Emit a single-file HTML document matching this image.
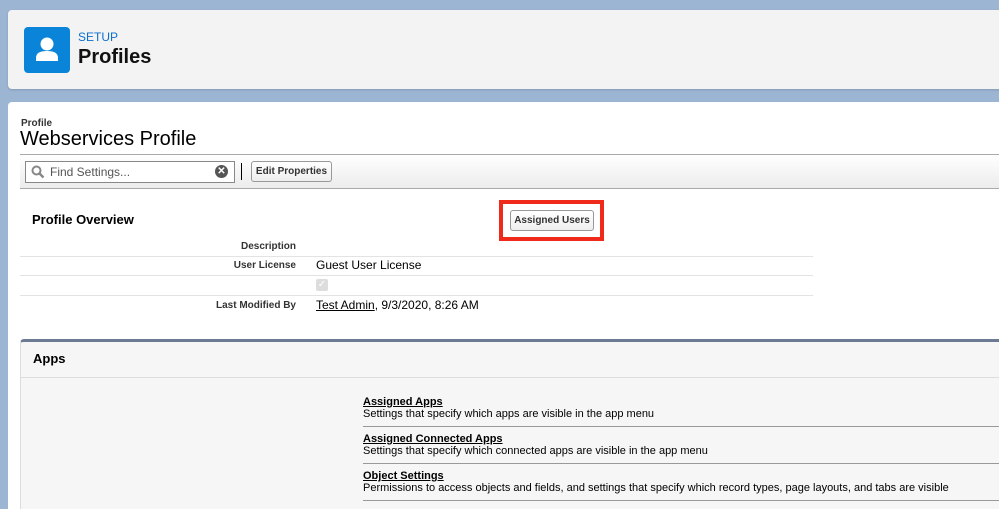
<!DOCTYPE html>
<html><head><style>
*{margin:0;padding:0;box-sizing:border-box}
html,body{width:999px;height:509px;overflow:hidden}
body{background:#9cb5d2;font-family:"Liberation Sans",Arial,sans-serif;position:relative;color:#000}
.a{position:absolute}
</style></head><body>
<div class="a" style="left:8px;top:10px;width:1000px;height:79px;background:#f3f3f3;border-radius:4px;box-shadow:0 1px 2px rgba(0,0,0,.15)"></div>
<div class="a" style="left:24px;top:27px;width:46px;height:46px;background:#0a84d8;border-radius:4px">
<svg width="46" height="46" viewBox="0 0 46 46"><circle cx="23" cy="17" r="6.5" fill="#fff"/><path d="M12 31c0-5 4-7 11-7s11 2 11 7v3H12z" fill="#fff"/></svg></div>
<div class="a" style="left:78px;top:30px;font-size:12px;color:#0a6fcf">SETUP</div>
<div class="a" style="left:78px;top:46px;font-size:20px;font-weight:bold;color:#111">Profiles</div>

<div class="a" style="left:8px;top:102px;width:1000px;height:420px;background:#fff;border-radius:4px"></div>
<div class="a" style="left:21px;top:118px;font-size:10px;font-weight:bold;color:#333">Profile</div>
<div class="a" style="left:20px;top:128px;font-size:20px;color:#000">Webservices Profile</div>
<div class="a" style="left:20px;top:154px;width:979px;height:35px;border-top:1px solid #aaa;border-bottom:1px solid #aaa;background:linear-gradient(#fff,#ececec)"></div>
<div class="a" style="left:25px;top:161px;width:210px;height:22px;border:1px solid #888;background:#fff"></div>
<svg class="a" style="left:31px;top:165px" width="14" height="14" viewBox="0 0 14 14"><circle cx="5.5" cy="5.5" r="4" fill="none" stroke="#888" stroke-width="2"/><path d="M8.5 8.5l4 4" stroke="#888" stroke-width="2.5"/></svg>
<div class="a" style="left:50px;top:165px;font-size:12px;color:#555">Find Settings...</div>
<div class="a" style="left:215px;top:165px;width:13px;height:13px;border-radius:50%;background:#555;color:#fff;font-size:10px;line-height:13px;text-align:center;font-weight:bold">✕</div>
<div class="a" style="left:241px;top:163px;width:1px;height:17px;background:#000"></div>
<div class="a" style="left:251px;top:161px;width:81px;height:21px;border:1px solid #999;border-radius:3px;background:linear-gradient(#fff,#eee);font-size:10px;font-weight:bold;color:#333;line-height:20px;text-align:center">Edit Properties</div>

<div class="a" style="left:32px;top:212px;font-size:13px;font-weight:bold">Profile Overview</div>
<div class="a" style="left:499px;top:200px;width:105px;height:41px;border:4px solid #f02a1a"></div>
<div class="a" style="left:510px;top:210px;width:84px;height:21px;border:1px solid #999;border-radius:3px;background:linear-gradient(#fff,#eee);font-size:10px;font-weight:bold;color:#333;line-height:20px;text-align:center">Assigned Users</div>

<div class="a" style="left:100px;top:241px;width:196px;text-align:right;font-size:10px;font-weight:bold;color:#333">Description</div>
<div class="a" style="left:20px;top:256px;width:793px;height:1px;background:#e3e3e3"></div>
<div class="a" style="left:100px;top:260px;width:196px;text-align:right;font-size:10px;font-weight:bold;color:#333">User License</div>
<div class="a" style="left:316px;top:258px;font-size:12px">Guest User License</div>
<div class="a" style="left:20px;top:275px;width:793px;height:1px;background:#e3e3e3"></div>
<div class="a" style="left:316px;top:279px;width:12px;height:12px;border-radius:2px;background:#ddd;color:#fff;font-size:10px;line-height:12px;text-align:center">✓</div>
<div class="a" style="left:20px;top:295px;width:793px;height:1px;background:#e3e3e3"></div>
<div class="a" style="left:100px;top:300px;width:196px;text-align:right;font-size:10px;font-weight:bold;color:#333">Last Modified By</div>
<div class="a" style="left:316px;top:298px;font-size:12px"><u>Test Admin</u>, 9/3/2020, 8:26 AM</div>

<div class="a" style="left:20px;top:339px;width:990px;height:180px;background:#f6f6f6;border-top:3px solid #6d7a94;border-left:1px solid #ddd;border-radius:4px 0 0 0"></div>
<div class="a" style="left:21px;top:377px;width:980px;height:1px;background:#ddd"></div>
<div class="a" style="left:33px;top:351px;font-size:13px;font-weight:bold">Apps</div>

<div class="a" style="left:363px;top:396px;font-size:11px;line-height:12px"><b><u>Assigned Apps</u></b><br>Settings that specify which apps are visible in the app menu</div>
<div class="a" style="left:363px;top:426px;width:640px;height:1px;background:#999"></div>
<div class="a" style="left:363px;top:433px;font-size:11px;line-height:12px"><b><u>Assigned Connected Apps</u></b><br>Settings that specify which connected apps are visible in the app menu</div>
<div class="a" style="left:363px;top:463px;width:640px;height:1px;background:#999"></div>
<div class="a" style="left:363px;top:470px;font-size:11px;line-height:12px"><b><u>Object Settings</u></b><br>Permissions to access objects and fields, and settings that specify which record types, page layouts, and tabs are visible</div>
<div class="a" style="left:363px;top:500px;width:640px;height:1px;background:#999"></div>
</body></html>
